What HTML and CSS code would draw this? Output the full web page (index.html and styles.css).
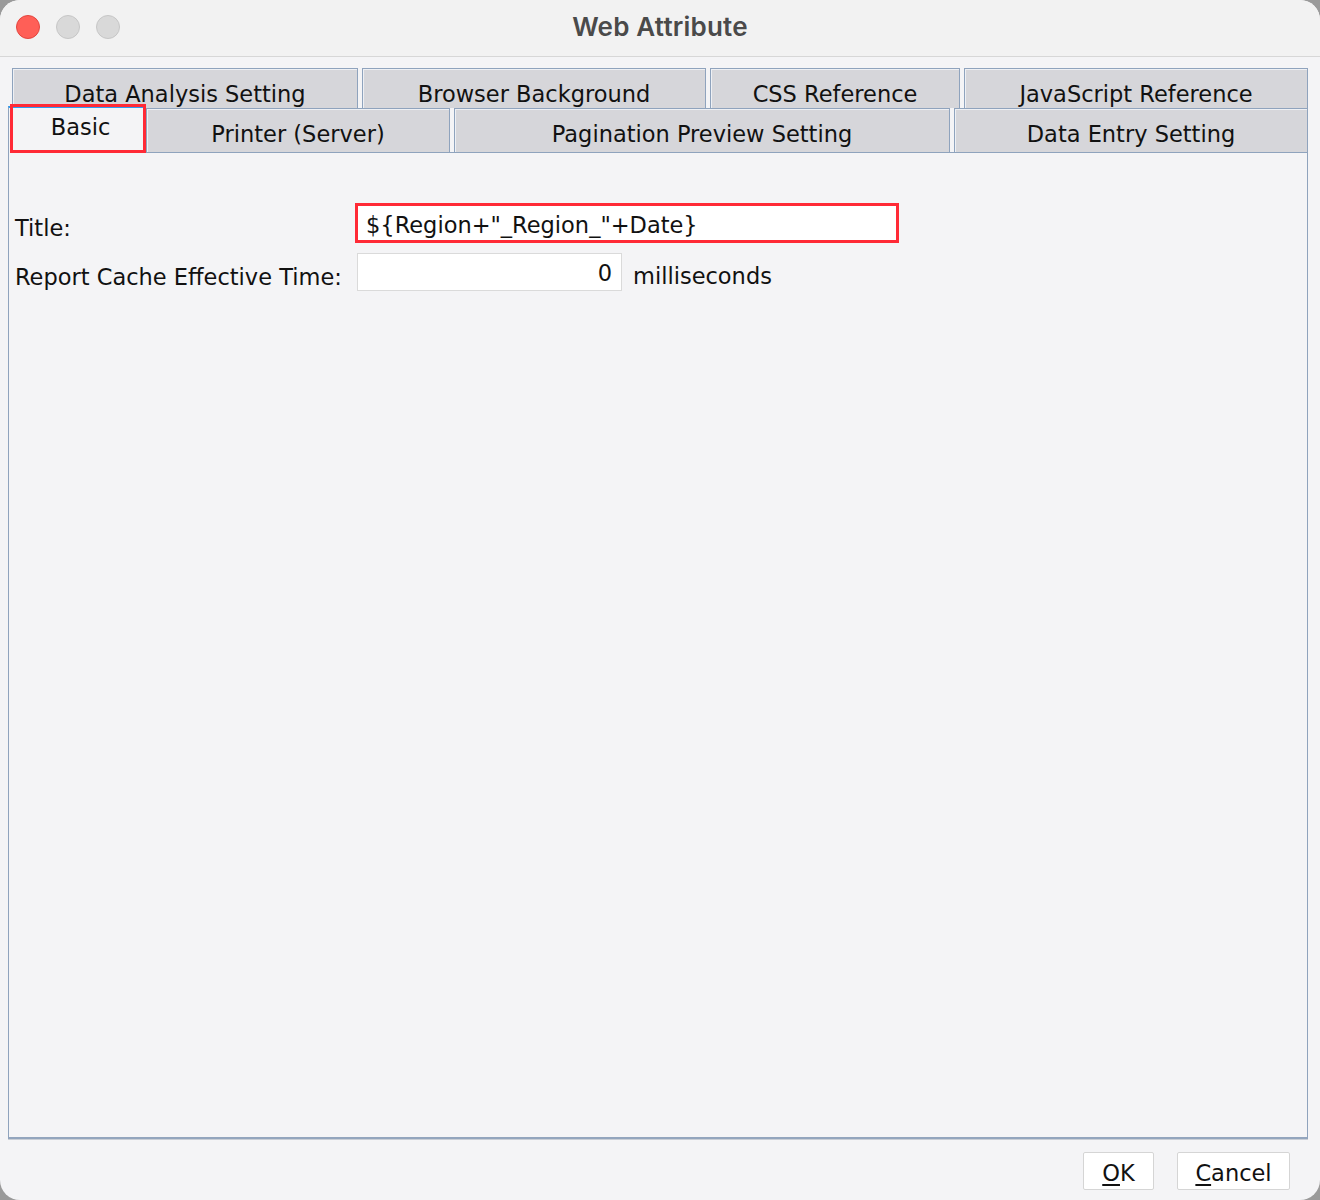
FILE: index.html
```html
<!DOCTYPE html>
<html>
<head>
<meta charset="utf-8">
<title>Web Attribute</title>
<link rel="stylesheet" href="styles.css">
</head>
<body>
<div class="window">
  <div class="titlebar">
    <div class="lights">
      <span class="light red"></span>
      <span class="light gray"></span>
      <span class="light gray"></span>
    </div>
    <div class="title">Web Attribute</div>
  </div>
  <div class="content">
    <div class="tabs">
      <div class="tabrow row1">
        <div class="tab w346">Data Analysis Setting</div>
        <div class="tab w344">Browser Background</div>
        <div class="tab w250">CSS Reference</div>
        <div class="tab w344">JavaScript Reference</div>
      </div>
      <div class="tabrow row2">
        <div class="tab selected w136">Basic</div>
        <div class="tab w304">Printer (Server)</div>
        <div class="tab w496">Pagination Preview Setting</div>
        <div class="tab w354">Data Entry Setting</div>
      </div>
    </div>
    <div class="panel">
      <div class="form">
        <label class="lbl">Title:</label>
        <div class="field title-field">${Region+"_Region_"+Date}</div>
        <label class="lbl">Report Cache Effective Time:</label>
        <div class="cache-row">
          <div class="field num-field">0</div>
          <span class="unit">milliseconds</span>
        </div>
      </div>
    </div>
    <div class="footer">
      <button class="btn ok"><u>O</u>K</button>
      <button class="btn cancel"><u>C</u>ancel</button>
    </div>
  </div>
</div>
</body>
</html>
```
FILE: styles.css
```css
html, body {
  margin: 0;
  padding: 0;
}
body {
  background: #9a9a9a;
  width: 1320px;
  height: 1200px;
  overflow: hidden;
}
.window {
  width: 1320px;
  height: 1200px;
  background: #f4f4f6;
  border-radius: 20px;
  overflow: hidden;
  display: flex;
  flex-direction: column;
  font-family: "DejaVu Sans", sans-serif;
  font-size: 22.5px;
  color: #111;
}
.titlebar {
  height: 56px;
  flex: none;
  background: #f2f2f2;
  border-bottom: 1px solid #d7d7d7;
  display: flex;
  align-items: center;
  position: relative;
}
.lights {
  display: flex;
  gap: 16px;
  padding-left: 16px;
  margin-top: -2px;
}
.light {
  width: 24px;
  height: 24px;
  border-radius: 50%;
  box-sizing: border-box;
}
.light.red {
  background: #ff5f57;
  border: 1px solid #e2463f;
}
.light.gray {
  background: #d9d9d9;
  border: 1px solid #c6c6c6;
}
.title {
  position: absolute;
  left: 0;
  right: 0;
  top: 0;
  height: 56px;
  line-height: 54px;
  text-align: center;
  font-family: Inter, "Noto Sans", sans-serif;
  font-weight: 600;
  font-size: 26px;
  color: #4a4a4a;
  pointer-events: none;
  letter-spacing: 0.2px;
}
.content {
  flex: 1;
  display: flex;
  flex-direction: column;
  padding: 11px 12px 0 8px;
}
.tabs {
  display: flex;
  flex-direction: column;
}
.tabrow {
  display: flex;
}
.row1 {
  margin-left: 4px;
  gap: 4px;
  height: 40px;
}
.row2 {
  height: 44px;
  gap: 4px;
}
.row2 .tab.selected + .tab {
  margin-left: -2px;
}
.tab {
  box-sizing: border-box;
  background: #d6d6da;
  border: 1px solid #8fa3bd;
  border-bottom: none;
  box-shadow: inset 1px 1px 0 #eef0f4;
  text-align: center;
  white-space: nowrap;
  overflow: hidden;
  line-height: 28px;
}
.row1 .tab {
  padding-top: 11px;
  height: 40px;
}
.row2 .tab {
  padding-top: 11px;
  height: 44px;
}
.tab.selected {
  position: relative;
  background: #f4f4f6;
  border-top: 2px solid #2f9bf2;
  margin-top: -2px;
  height: 47px;
  padding-top: 5px;
  padding-left: 9px;
  margin-bottom: -1px;
  z-index: 2;
  overflow: visible;
  box-shadow: none;
}
.tab.selected::after {
  content: "";
  position: absolute;
  left: 1px;
  top: -4px;
  right: -3px;
  bottom: 0px;
  border: 3px solid #ff2a36;
}
.w346 { width: 346px; }
.w344 { width: 344px; }
.w250 { width: 250px; }
.w136 { width: 136px; }
.w304 { width: 304px; }
.w496 { width: 496px; }
.w354 { width: 354px; }
.panel {
  height: 987px;
  box-sizing: border-box;
  border: 1px solid #8fa3bd;
  border-bottom: 2px solid #93a5bd;
  box-shadow: 0 1px 0 #c9ced6;
  background: #f4f4f6;
  position: relative;
  z-index: 1;
  padding: 50px 0 0 6px;
}
.form {
  display: grid;
  grid-template-columns: 340px auto;
  row-gap: 10px;
  align-items: center;
  justify-items: start;
}
.lbl {
  line-height: 28px;
  padding-top: 9px;
}
.field {
  box-sizing: border-box;
  background: #fff;
  line-height: 28px;
  white-space: nowrap;
}
.title-field {
  width: 544px;
  height: 40px;
  border: 3px solid #ff2a36;
  padding: 5px 0 0 8px;
}
.cache-row {
  display: flex;
  align-items: center;
  gap: 11px;
  padding-left: 2px;
}
.num-field {
  width: 265px;
  height: 38px;
  border: 1px solid #dadada;
  text-align: right;
  padding: 5px 9px 0 0;
}
.unit {
  line-height: 28px;
  padding-top: 7px;
}
.footer {
  display: flex;
  justify-content: flex-end;
  gap: 23px;
  padding: 13px 30px 0 0;
  margin-right: -12px;
}
.btn {
  box-sizing: border-box;
  height: 38px;
  background: #fff;
  border: 1px solid #d5d5d5;
  border-radius: 2px;
  font-family: "DejaVu Sans", sans-serif;
  font-size: 22.5px;
  color: #111;
  padding: 3px 0 0 0;
  line-height: 34px;
}
.btn u {
  text-underline-offset: 3px;
}
.ok { width: 71px; }
.cancel { width: 113px; }
```
